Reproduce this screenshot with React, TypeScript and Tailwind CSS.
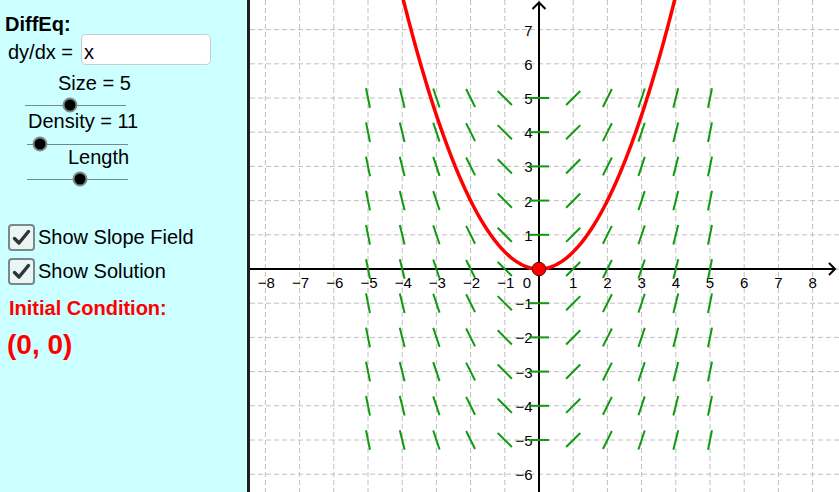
import React from "react";

const O = { x: 289, y: 269 };
const U = 34.2;
const W = 589;
const H = 492;

const sx = (v: number) => O.x + v * U;
const sy = (v: number) => O.y - v * U;
const label = (n: number) => (n < 0 ? `\u2212${-n}` : `${n}`);

function Slider({ min, max, value, className }: { min: number; max: number; value: number; className: string }) {
  const pos = ((value - min) / (max - min)) * 101;
  return (
    <div className={`relative h-[10px] w-[101px] ${className}`}>
      <div className="absolute left-0 right-0 top-[5px] h-px bg-[#6f8c8c]" />
      <div
        className="absolute top-[5px] h-[15px] w-[15px] -translate-x-1/2 -translate-y-1/2 rounded-full border-[2.5px] border-[#7c8a8a] bg-black"
        style={{ left: pos }}
      />
    </div>
  );
}

function Check({ text }: { text: string }) {
  return (
    <div className="flex h-[27px] items-center pl-[8px]">
      <div className="flex h-[27px] w-[27px] items-center justify-center rounded-[4px] border-2 border-[#7a8888] bg-[#eaf6f6]">
        <svg width="19" height="17" viewBox="0 0 19 17">
          <path d="M2.5 9.5 L7 14 L16.5 2.5" fill="none" stroke="#333" strokeWidth="3.4" strokeLinecap="round" strokeLinejoin="round" />
        </svg>
      </div>
      <span className="ml-[3px] leading-[27px]">{text}</span>
    </div>
  );
}

function Graph() {
  const xs = Array.from({ length: 17 }, (_, i) => i - 8);
  const ys = Array.from({ length: 14 }, (_, i) => i - 6);
  const field = Array.from({ length: 11 }, (_, i) => i - 5);

  const curve: string[] = [];
  for (let x = -4.2; x <= 4.2001; x += 0.05) {
    curve.push(`${sx(x).toFixed(2)},${sy((x * x) / 2).toFixed(2)}`);
  }

  return (
    <svg width={W} height={H} viewBox={`0 0 ${W} ${H}`} className="block">
      {/* grid */}
      {xs.map((k) => (
        <line key={`gx${k}`} x1={sx(k)} y1={0} x2={sx(k)} y2={H} stroke="#c0c0c0" strokeWidth="1" strokeDasharray="5 3" />
      ))}
      {ys.map((k) => (
        <line key={`gy${k}`} x1={0} y1={sy(k)} x2={W} y2={sy(k)} stroke="#c0c0c0" strokeWidth="1" strokeDasharray="5 3" />
      ))}

      {/* axes */}
      <line x1={0} y1={O.y} x2={585} y2={O.y} stroke="#000" strokeWidth="2" />
      <polyline points={`579,263 585,269 579,275`} fill="none" stroke="#000" strokeWidth="2" />
      <line x1={O.x} y1={H} x2={O.x} y2={2} stroke="#000" strokeWidth="2" />
      <polyline points={`282.5,9 289,2.5 295.5,9`} fill="none" stroke="#000" strokeWidth="2" />

      {/* labels */}
      <g fontFamily="'Liberation Sans', Arial, sans-serif" fontSize="15" fill="#000">
        {xs.filter((k) => k !== 0).map((k) => (
          <text key={`lx${k}`} x={sx(k) + (k < 0 ? 1 : 0)} y={288} textAnchor="middle">
            {label(k)}
          </text>
        ))}
        <text x={277} y={288} textAnchor="middle">0</text>
        {ys.filter((k) => k !== 0).map((k) => (
          <text key={`ly${k}`} x={282.5} y={sy(k) + 6} textAnchor="end">
            {label(k)}
          </text>
        ))}
      </g>

      {/* slope field dy/dx = x */}
      {field.map((i) =>
        field.map((j) => {
          const cx = sx(i);
          const cy = sy(j);
          const n = Math.sqrt(1 + i * i);
          const dx = 10 / n;
          const dy = (i * 10) / n;
          return (
            <line key={`s${i}_${j}`} x1={cx - dx} y1={cy + dy} x2={cx + dx} y2={cy - dy} stroke="#0f9a0f" strokeWidth="2" />
          );
        })
      )}

      {/* solution */}
      <polyline points={curve.join(" ")} fill="none" stroke="#ff0000" strokeWidth="3.5" strokeLinejoin="round" />
      <circle cx={O.x} cy={O.y} r={6.8} fill="#ff0000" stroke="#5a0000" strokeWidth="1" />
    </svg>
  );
}

export default function App() {
  return (
    <div className="flex h-[492px] w-[839px] overflow-hidden bg-white font-['Liberation_Sans',Arial,sans-serif] text-[20px] text-black">
      <div className="h-full w-[250px] shrink-0 border-r-[3px] border-[#1e1e1e] bg-[#ccffff] pt-[14px]">
        <div className="pl-[5px] font-bold leading-[20px]">DiffEq:</div>

        <div className="flex h-[31px] items-start pl-[8px]">
          <span className="mt-[8px] w-[73px] leading-[20px]">dy/dx =</span>
          <div className="flex h-[31px] w-[130px] items-start rounded-[5px] border border-[#c8cccc] bg-white pl-[2px]">
            <span className="mt-[7px] leading-[20px]">x</span>
          </div>
        </div>

        <div className="mt-[10px] pl-[58px] leading-[16px]">Size = 5</div>
        <Slider min={1} max={10} value={5} className="ml-[25px] mt-[9px]" />

        <div className="mt-[3px] pl-[28px] leading-[16px]">Density = 11</div>
        <Slider min={5} max={50} value={11} className="ml-[27px] mt-[10px]" />

        <div className="pl-[68px] leading-[16px]">Length</div>
        <Slider min={0} max={1} value={0.525} className="ml-[27px] mt-[9px]" />

        <div className="mt-[40px] flex flex-col gap-[7px]">
          <Check text="Show Slope Field" />
          <Check text="Show Solution" />
        </div>

        <div className="mt-[13px] pl-[9px] font-bold leading-[20px] text-[#ff0000]">Initial Condition:</div>
        <div className="mt-[13px] pl-[7px] text-[28px] font-bold leading-[28px] text-[#ff0000]">(0, 0)</div>
      </div>
      <Graph />
    </div>
  );
}
